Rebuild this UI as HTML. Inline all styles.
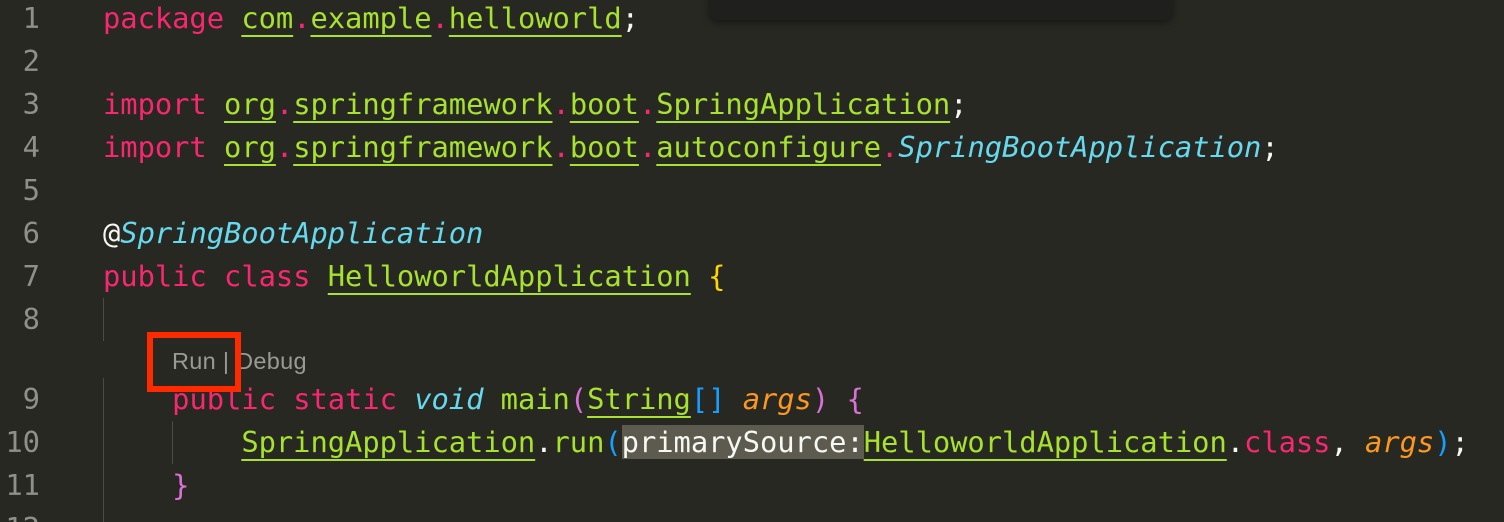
<!DOCTYPE html>
<html><head><meta charset="utf-8"><style>
html,body{margin:0;padding:0;width:1504px;height:522px;overflow:hidden;}
body{background:#272822;font-family:"DejaVu Sans Mono","Liberation Mono",monospace;font-size:28.8px;}
#w{position:relative;width:1504px;height:522px;overflow:hidden;}
.ln{position:absolute;left:0;width:40px;text-align:right;color:#90908a;line-height:43px;height:43px;}
.l{position:absolute;left:103px;line-height:43px;height:43px;white-space:pre;color:#f8f8f2;letter-spacing:-0.05px;}
.k{color:#f92672}.g{color:#a6e22e}.u{text-decoration:underline;text-decoration-thickness:2px;text-underline-offset:7px;text-decoration-color:#a6e22e}
.c{color:#66d9ef;font-style:italic}.o{color:#fd971f;font-style:italic}.p{color:#da70d6}.b{color:#179fff}.y{color:#ffd700}
.hl{background:#5d5b4f;color:#f8f8f2}
.guide{position:absolute;width:1px;background:#4a4b44}
</style></head><body><div id="w">
<div style="position:absolute;left:710px;top:-10px;width:462px;height:30px;background:#1f1f1d;border-radius:8px;box-shadow:0 2px 8px rgba(0,0,0,.5)"></div>

<div class="ln" style="top:-3px">1</div>
<div class="ln" style="top:40px">2</div>
<div class="ln" style="top:83px">3</div>
<div class="ln" style="top:126px">4</div>
<div class="ln" style="top:169px">5</div>
<div class="ln" style="top:212px">6</div>
<div class="ln" style="top:255px">7</div>
<div class="ln" style="top:298px">8</div>
<div class="ln" style="top:378px">9</div>
<div class="ln" style="top:421px">10</div>
<div class="ln" style="top:464px">11</div>
<div class="ln" style="top:507px;height:15px;overflow:hidden">12</div>

<div class="l" style="top:-3px"><span class="k">package</span> <span class="g u">com</span><span class="k">.</span><span class="g u">example</span><span class="k">.</span><span class="g u">helloworld</span>;</div>
<div class="l" style="top:83px"><span class="k">import</span> <span class="g u">org</span><span class="k">.</span><span class="g u">springframework</span><span class="k">.</span><span class="g u">boot</span><span class="k">.</span><span class="g u">SpringApplication</span>;</div>
<div class="l" style="top:126px"><span class="k">import</span> <span class="g u">org</span><span class="k">.</span><span class="g u">springframework</span><span class="k">.</span><span class="g u">boot</span><span class="k">.</span><span class="g u">autoconfigure</span><span class="k">.</span><span class="c">SpringBootApplication</span>;</div>
<div class="l" style="top:212px">@<span class="c">SpringBootApplication</span></div>
<div class="l" style="top:255px"><span class="k">public</span> <span class="k">class</span> <span class="g u">HelloworldApplication</span> <span class="y">{</span></div>
<div class="l" style="top:378px">    <span class="k">public</span> <span class="k">static</span> <span class="c">void</span> <span class="g">main</span><span class="p">(</span><span class="g u">String</span><span class="b">[]</span> <span class="o">args</span><span class="p">)</span> <span class="p">{</span></div>
<div class="l" style="top:421px">        <span class="g u">SpringApplication</span>.<span class="g">run</span><span class="b">(</span><span class="hl">primarySource:</span><span class="g u">HelloworldApplication</span>.<span class="k">class</span>, <span class="o">args</span><span class="b">)</span>;</div>
<div class="l" style="top:464px">    <span class="p">}</span></div>

<div style="position:absolute;left:172px;top:345px;font-family:'Liberation Sans','DejaVu Sans',sans-serif;font-size:23.5px;color:#9a9a94;line-height:32px;letter-spacing:0.3px">Run | Debug</div>
<div style="position:absolute;left:147px;top:332px;width:82px;height:48px;border:6px solid #ff2a00"></div>

<div class="guide" style="left:103px;top:298px;height:43px"></div>
<div class="guide" style="left:103px;top:378px;height:144px"></div>
<div class="guide" style="left:172px;top:421px;height:43px"></div>
</div></body></html>
